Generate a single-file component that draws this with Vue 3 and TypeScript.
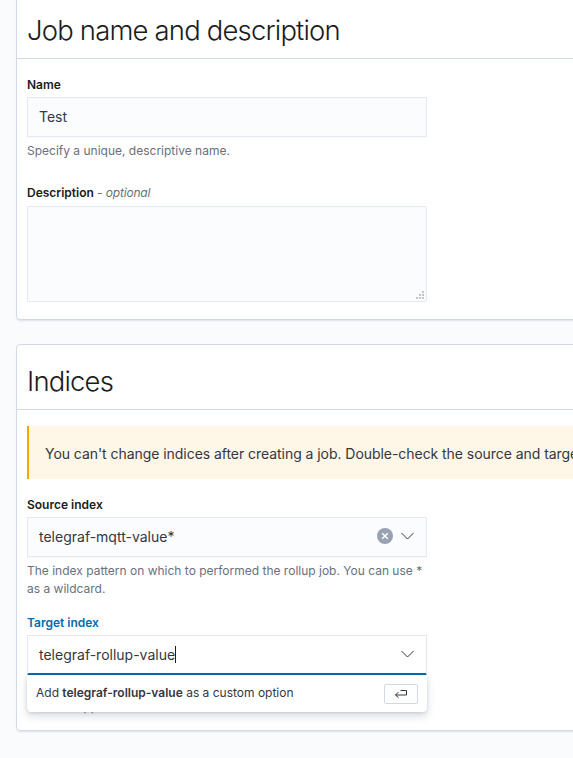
<script setup lang="ts">
const title1 = 'Job name and description'
const title2 = 'Indices'
</script>

<template>
  <main class="page">
    <section class="card first">
      <header class="card-head"><h2>{{ title1 }}</h2></header>
      <div class="card-body">
        <div class="field">
          <label>Name</label>
          <div class="control text-control">Test</div>
          <p class="help">Specify a unique, descriptive name.</p>
        </div>
        <div class="field desc">
          <label>Description <span class="optional"><span class="dash">-</span> <em>optional</em></span></label>
          <div class="textarea">
            <svg class="grip" width="9" height="9" viewBox="0 0 9 9" aria-hidden="true">
              <path d="M6 0h2v2H6zM3 3h2v2H3zM6 3h2v2H6zM0 6h2v2H0zM3 6h2v2H3zM6 6h2v2H6z" fill="#c4c4c4" />
            </svg>
          </div>
        </div>
      </div>
    </section>

    <section class="card second">
      <header class="card-head"><h2>{{ title2 }}</h2></header>
      <div class="card-body">
        <div class="callout">You can't change indices after creating a job. Double-check the source and target names.</div>
        <div class="field source">
          <label>Source index</label>
          <div class="control combo">
            <span>telegraf-mqtt-value*</span>
            <span class="icons">
              <span class="clear">
                <svg width="8" height="8" viewBox="0 0 8 8" aria-hidden="true">
                  <path d="M1.2 1.2l5.6 5.6M6.8 1.2L1.2 6.8" stroke="#fff" stroke-width="1.5" fill="none" />
                </svg>
              </span>
              <svg class="chev" width="13" height="8" viewBox="0 0 13 8" aria-hidden="true">
                <path d="M.5 1l6 6 6-6" stroke="#343741" stroke-width="1" fill="none" />
              </svg>
            </span>
          </div>
          <p class="help">The index pattern on which to performed the rollup job. You can use * as a wildcard.</p>
        </div>
        <div class="field target">
          <label class="active">Target index</label>
          <div class="control combo focused">
            <span class="typed">telegraf-rollup-value<i class="caret"></i></span>
            <span class="icons">
              <svg class="chev" width="13" height="8" viewBox="0 0 13 8" aria-hidden="true">
                <path d="M.5 1l6 6 6-6" stroke="#343741" stroke-width="1" fill="none" />
              </svg>
            </span>
          </div>
          <p class="help">The name of the index in which to store the rollup data. Wildcards<br />are not supported.</p>
          <div class="popover">
            <span class="popover-text">Add <strong>telegraf-rollup-value</strong> as a custom option</span>
            <span class="enter">
              <svg width="14" height="10" viewBox="0 0 14 10" aria-hidden="true">
                <path d="M4.5 3L1.5 6l3 2.6M1.5 6H12.5V1.5H6.5" stroke="#343741" stroke-width="1" fill="none" />
              </svg>
            </span>
          </div>
        </div>
      </div>
    </section>
  </main>
</template>

<style>
html, body { margin: 0; background: #f9fafc; overflow: hidden; }
</style>

<style scoped>
.page {
  width: 800px;
  height: 758px;
  overflow: hidden;
  padding-left: 16px;
  box-sizing: border-box;
  background: #fafbfd;
  font-family: Inter, "Liberation Sans", sans-serif;
  color: #1a1c21;
  display: flex;
  flex-direction: column;
  gap: 24px;
}
.card {
  background: #fff;
  border: 1px solid #d3dae6;
  border-radius: 4px;
  box-shadow: 0 2px 2px -1px rgba(152, 162, 179, 0.3);
  flex: none;
}
.first { margin-top: -7px; }
.card-head {
  height: 65px;
  box-sizing: border-box;
  padding: 7px 0 0 10px;
  border-bottom: 1px solid #d3dae6;
  display: flex;
  align-items: center;
}
h2 {
  margin: 0;
  font-size: 27.43px;
  font-weight: 300;
  letter-spacing: -0.8px;
  line-height: 36px;
}
.card-body { padding: 16px 10px 17px; position: relative; }
.second .card-body { padding-bottom: 14px; }
.field { width: 400px; position: relative; }
label {
  display: block;
  font-size: 12px;
  font-weight: 600;
  line-height: 20px;
  margin-bottom: 2px;
}
.desc label { line-height: 18px; margin-bottom: 4px; }
label.active { color: #006bb4; }
.optional { color: #69707d; font-weight: 400; }
.optional em { letter-spacing: -0.2px; }
.control {
  height: 40px;
  box-sizing: border-box;
  background: #fbfcfd;
  border: 1px solid #e6e8f0;
  box-shadow: 0 1px 1px -1px rgba(152, 162, 179, 0.3);
  font-size: 14px;
  color: #343741;
  padding: 0 12px 2px 11px;
  display: flex;
  align-items: center;
}
.help {
  margin: 5px 0 0;
  font-size: 12px;
  line-height: 18px;
  color: #69707d;
}
.desc { margin-top: 24px; }
.textarea {
  height: 96px;
  box-sizing: border-box;
  background: #fbfcfd;
  border: 1px solid #e6e8f0;
  border-radius: 2px;
  position: relative;
}
.grip { position: absolute; right: 1px; bottom: 1px; }
.callout {
  width: 800px;
  height: 53px;
  box-sizing: border-box;
  background: #fef6e6;
  border-left: 2px solid #f5a700;
  padding: 1px 0 0 16px;
  display: flex;
  align-items: center;
  font-size: 14px;
  letter-spacing: -0.05px;
  color: #343741;
  white-space: nowrap;
}
.source { margin-top: 16px; }
.target { margin-top: 15px; }
.combo { justify-content: space-between; }
.icons { display: flex; align-items: center; gap: 8px; }
.clear {
  width: 16px;
  height: 16px;
  border-radius: 50%;
  background: #98a2b3;
  display: flex;
  align-items: center;
  justify-content: center;
}
.focused {
  background: #fff;
  box-shadow: inset 0 -1px 0 #006bb4;
  border-bottom-color: #006bb4;
}
.typed { display: inline-flex; align-items: center; }
.caret { display: inline-block; width: 1px; height: 17px; background: #1a1c21; }
.popover {
  position: absolute;
  left: 0;
  top: 62px;
  width: 100%;
  height: 37px;
  box-sizing: border-box;
  background: #fff;
  border-radius: 0 0 4px 4px;
  box-shadow: 0 4px 8px rgba(65, 78, 101, 0.2), 0 1px 3px rgba(65, 78, 101, 0.15);
  font-size: 12px;
  color: #343741;
  padding: 0 9px;
  display: flex;
  align-items: center;
  justify-content: space-between;
}
.popover-text { margin-bottom: 2px; }
.popover strong { font-weight: 600; }
.enter {
  width: 34px;
  height: 20px;
  box-sizing: border-box;
  border: 1px solid #d3dae6;
  border-radius: 2px;
  display: flex;
  align-items: center;
  justify-content: center;
}
</style>
